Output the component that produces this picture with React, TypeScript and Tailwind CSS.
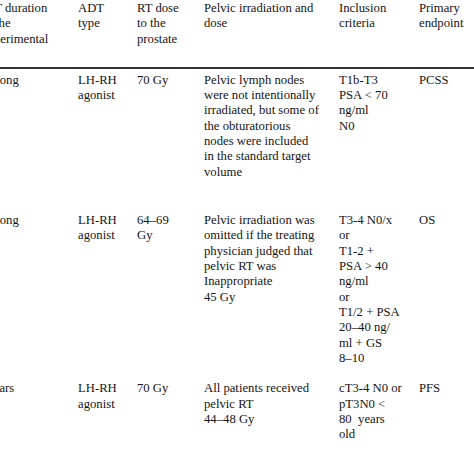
const cols = 'grid grid-cols-[96px_59px_67px_135px_80px_55px]';

type Row = { cells: string[][]; pad: string; lead: string };

const header: string[][] = [
    ['ADT', 'type'],
    ['RT dose', 'to the', 'prostate'],
    ['Pelvic irradiation and', 'dose'],
    ['Inclusion', 'criteria'],
    ['Primary', 'endpoint'],
];

const rows: Row[] = [
    {
        pad: 'pt-[4px] pb-[33px]',
        lead: 'ml-[10px]',
        cells: [
            ['Long'],
            ['LH-RH', 'agonist'],
            ['70 Gy'],
            [
                'Pelvic lymph nodes',
                'were not intentionally',
                'irradiated, but some of',
                'the obturatorious',
                'nodes were included',
                'in the standard target',
                'volume',
            ],
            ['T1b-T3', 'PSA < 70', 'ng/ml', 'N0'],
            ['PCSS'],
        ],
    },
    {
        pad: 'pb-[15px]',
        lead: 'ml-[10px]',
        cells: [
            ['Long'],
            ['LH-RH', 'agonist'],
            ['64–69', 'Gy'],
            [
                'Pelvic irradiation was',
                'omitted if the treating',
                'physician judged that',
                'pelvic RT was',
                'Inappropriate',
                '45 Gy',
            ],
            ['T3-4 N0/x', 'or', 'T1-2 +', 'PSA > 40', 'ng/ml', 'or', 'T1/2 + PSA', '20–40 ng/', 'ml + GS', '8–10'],
            ['OS'],
        ],
    },
    {
        pad: 'pb-[15px]',
        lead: 'ml-[-4px]',
        cells: [
            ['3 years'],
            ['LH-RH', 'agonist'],
            ['70 Gy'],
            ['All patients received', 'pelvic RT', '44–48 Gy'],
            ['cT3-4 N0 or', 'pT3N0 <', '80  years', 'old'],
            ['PFS'],
        ],
    },
];

const Cell = ({ lines }: { lines: string[] }) => (
    <div className="whitespace-pre">
        {lines.map((l, i) => (
            <div key={i}>{l}</div>
        ))}
    </div>
);

export default function App() {
    return (
        <div className="h-[474px] w-[474px] overflow-hidden bg-white font-['Liberation_Serif',serif] text-[12.7px] leading-[15.35px] text-[#151515]">
            <div className="-ml-[18px] w-[492px]">
                <div className={`${cols} pt-[1px] pb-[20px]`}>
                    <div className="whitespace-pre">
                        <div className="-ml-[6px]">ADT duration</div>
                        <div>in the</div>
                        <div>experimental</div>
                    </div>
                    {header.map((c, i) => (
                        <Cell key={i} lines={c} />
                    ))}
                </div>
                <div className="h-[1.5px] bg-[#333]" />
                {rows.map((r, ri) => (
                    <div key={ri} className={`${cols} ${r.pad}`}>
                        {r.cells.map((c, i) => (
                            <div key={i} className={i === 0 ? r.lead : ''}>
                                <Cell lines={c} />
                            </div>
                        ))}
                    </div>
                ))}
            </div>
        </div>
    );
}
